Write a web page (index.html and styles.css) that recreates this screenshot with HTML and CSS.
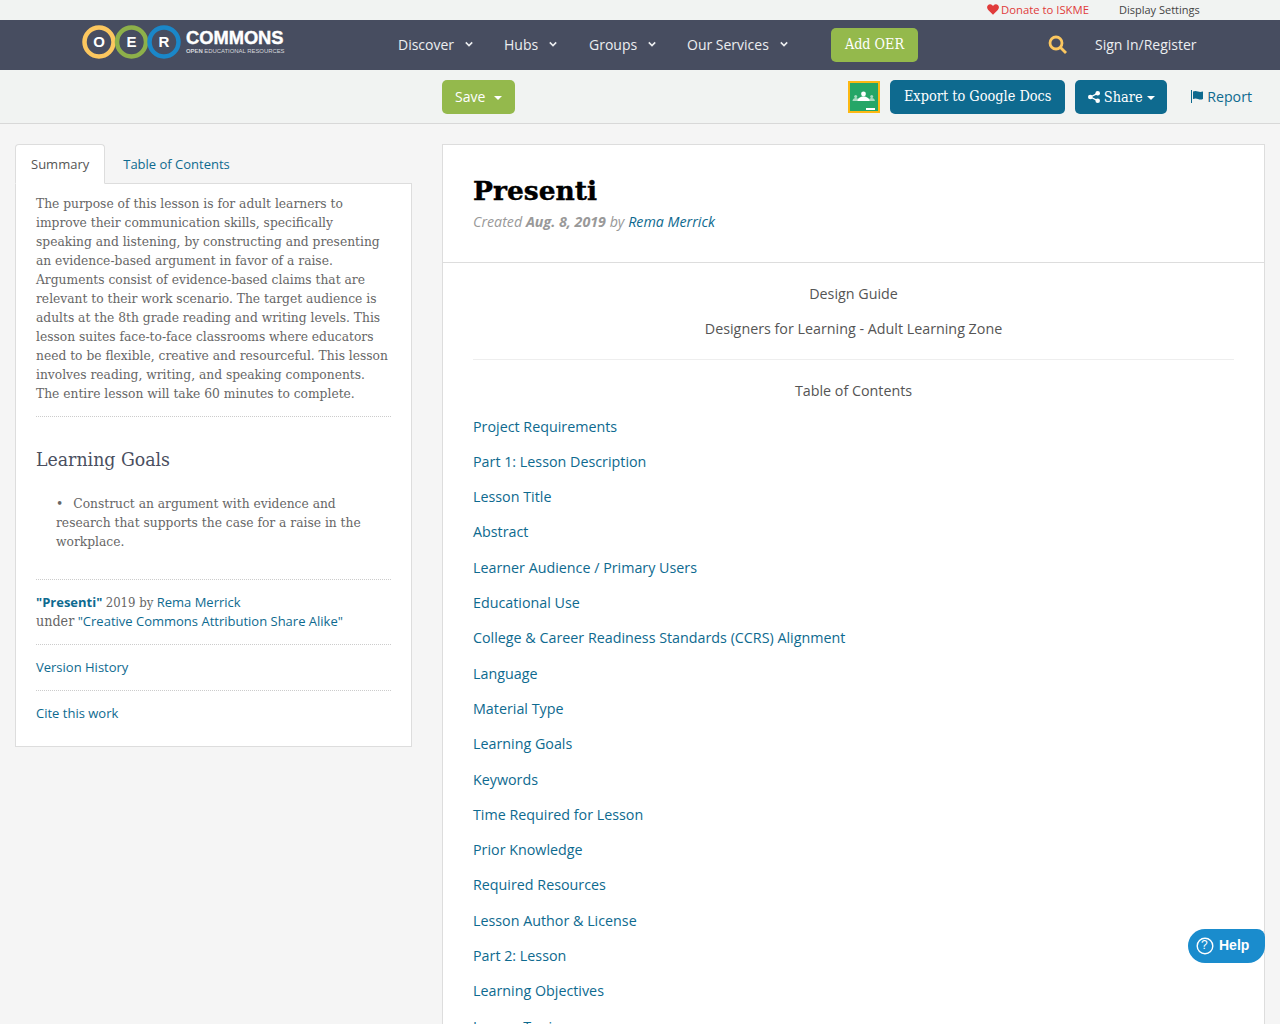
FILE: index.html
```html
<!DOCTYPE html>
<html lang="en">
<head>
    <meta charset="UTF-8">
    <meta name="viewport" content="width=device-width, initial-scale=1.0">
    <title>Presenti - OER Commons</title>
    <link rel="stylesheet" href="styles.css">
</head>
<body>
    <div class="utility-bar">
        <a class="donate" href="#">
            <svg class="heart" viewBox="0 0 24 22"><path d="M12 21.5 2.400 11.800C-.6 8.700-.5 4.600 1.900 2.300 4.300 0 8.300 0 10.700 2.500L12 3.900l1.300-1.400C15.700 0 19.700 0 22.100 2.300c2.400 2.300 2.500 6.400-.5 9.500z"/></svg>
            Donate to ISKME
        </a>
        <a class="display-settings" href="#">Display Settings</a>
    </div>

    <nav class="main-nav">
        <a class="logo" href="#">
            <svg width="100" height="36" viewBox="0 0 100 36">
                <circle cx="17" cy="18" r="14.500" fill="none" stroke="#fcc75f" stroke-width="4.500"/>
                <circle cx="49.500" cy="18" r="14.500" fill="none" stroke="#8db04a" stroke-width="4.500"/>
                <circle cx="82" cy="18" r="14.500" fill="none" stroke="#1a87c9" stroke-width="4.500"/>
                <text x="17" y="23" class="logo-letter">O</text>
                <text x="49.500" y="23" class="logo-letter">E</text>
                <text x="82" y="23" class="logo-letter">R</text>
            </svg>
            <span class="logo-text">
                <span class="logo-title">COMMONS</span>
                <span class="logo-sub"><b>OPEN</b> EDUCATIONAL RESOURCES</span>
            </span>
        </a>
        <ul class="nav-links">
            <li class="nav-discover">Discover <svg class="chevron" viewBox="0 0 10 6"><path d="M1 1l4 4 4-4"/></svg></li>
            <li class="nav-hubs">Hubs <svg class="chevron" viewBox="0 0 10 6"><path d="M1 1l4 4 4-4"/></svg></li>
            <li class="nav-groups">Groups <svg class="chevron" viewBox="0 0 10 6"><path d="M1 1l4 4 4-4"/></svg></li>
            <li class="nav-services">Our Services <svg class="chevron" viewBox="0 0 10 6"><path d="M1 1l4 4 4-4"/></svg></li>
        </ul>
        <a class="add-oer" href="#">Add OER</a>
        <svg class="search-icon" viewBox="0 0 20 20"><circle cx="8" cy="8" r="6" /><path d="M12.500 12.500 18 18"/></svg>
        <a class="sign-in" href="#">Sign In/Register</a>
    </nav>

    <div class="action-bar">
        <a class="btn btn-save" href="#">Save <span class="caret"></span></a>
        <div class="action-right">
            <a class="classroom" href="#">
                <svg width="28" height="28" viewBox="0 0 28 28">
                    <rect width="28" height="28" fill="#25a667"/>
                    <circle cx="5.700" cy="13.500" r="1.500" fill="#a8dbc0"/>
                    <circle cx="21.700" cy="13.500" r="1.500" fill="#a8dbc0"/>
                    <path d="M2.500 18c0-2 1.500-3 3.200-3s3.200 1 3.200 3zM18.500 18c0-2 1.500-3 3.200-3s3.200 1 3.200 3z" fill="#a8dbc0"/>
                    <circle cx="13.500" cy="11" r="2.400" fill="#fff"/>
                    <path d="M7.500 18c0-3 3-4.500 6-4.500s6 1.500 6 4.500z" fill="#fff"/>
                    <rect x="16" y="25" width="9" height="2" fill="#fff"/>
                </svg>
            </a>
            <a class="btn btn-blue btn-export" href="#">Export to Google Docs</a>
            <a class="btn btn-blue btn-share" href="#">
                <svg class="share-icon" viewBox="0 0 12 12"><circle cx="2.300" cy="6" r="2.300"/><circle cx="9.700" cy="2.300" r="2.300"/><circle cx="9.700" cy="9.700" r="2.300"/><path d="M2.300 6l7.400-3.700M2.300 6l7.400 3.700" stroke="#fff" stroke-width="1.300"/></svg>
                Share <span class="caret"></span>
            </a>
            <a class="report" href="#">
                <svg class="flag-icon" viewBox="0 0 14 13"><path d="M1 0h1v13H1z"/><path d="M3 1.500c2-1 3.500-.6 5 0s3 .6 5 0v7.500c-2 .8-3.500.6-5 0s-3-.8-5 0z"/></svg>
                Report
            </a>
        </div>
    </div>

    <div class="page">
        <aside class="sidebar">
            <div class="tabs">
                <a class="tab active" href="#">Summary</a>
                <a class="tab" href="#">Table of Contents</a>
            </div>
            <div class="panel">
                <p class="summary">The purpose of this lesson is for adult learners to improve their communication skills, specifically speaking and listening, by constructing and presenting an evidence-based argument in favor of a raise. Arguments consist of evidence-based claims that are relevant to their work scenario. The target audience is adults at the 8th grade reading and writing levels. This lesson suites face-to-face classrooms where educators need to be flexible, creative and resourceful. This lesson involves reading, writing, and speaking components. The entire lesson will take 60 minutes to complete.</p>
                <h3>Learning Goals</h3>
                <ul class="goals">
                    <li>Construct an argument with evidence and research that supports the case for a raise in the workplace.</li>
                </ul>
                <div class="panel-row license">
                    <a href="#"><b>"Presenti"</b></a> <span class="slab slab-year">2019 by</span> <a href="#">Rema Merrick</a><br>
                    <span class="slab">under</span> <a href="#">"Creative Commons Attribution Share Alike"</a>
                </div>
                <div class="panel-row"><a href="#">Version History</a></div>
                <div class="panel-row"><a href="#">Cite this work</a></div>
            </div>
        </aside>

        <main class="content">
            <header class="content-head">
                <h1>Presenti</h1>
                <p class="meta">Created <b>Aug. 8, 2019</b> by <a href="#">Rema Merrick</a></p>
            </header>
            <div class="content-body">
                <p class="center">Design Guide</p>
                <p class="center">Designers for Learning - Adult Learning Zone</p>
                <hr>
                <p class="center toc-title">Table of Contents</p>
                <ul class="toc">
                    <li><a href="#">Project Requirements</a></li>
                    <li><a href="#">Part 1: Lesson Description</a></li>
                    <li><a href="#">Lesson Title</a></li>
                    <li><a href="#">Abstract</a></li>
                    <li><a href="#">Learner Audience / Primary Users</a></li>
                    <li><a href="#">Educational Use</a></li>
                    <li><a href="#">College &amp; Career Readiness Standards (CCRS) Alignment</a></li>
                    <li><a href="#">Language</a></li>
                    <li><a href="#">Material Type</a></li>
                    <li><a href="#">Learning Goals</a></li>
                    <li><a href="#">Keywords</a></li>
                    <li><a href="#">Time Required for Lesson</a></li>
                    <li><a href="#">Prior Knowledge</a></li>
                    <li><a href="#">Required Resources</a></li>
                    <li><a href="#">Lesson Author &amp; License</a></li>
                    <li><a href="#">Part 2: Lesson</a></li>
                    <li><a href="#">Learning Objectives</a></li>
                    <li><a href="#">Lesson Topics</a></li>
                </ul>
            </div>
        </main>
    </div>

    <a class="help" href="#">
        <svg class="help-icon" viewBox="0 0 18 18"><circle cx="9" cy="9" r="7.800"/></svg>
        <span class="help-q">?</span>
        Help
    </a>
</body>
</html>
```

FILE: styles.css
```css
* {
    margin: 0;
    padding: 0;
    box-sizing: border-box;
}

html, body {
    height: 1024px;
    overflow: hidden;
}

body {
    font-family: 'Open Sans', sans-serif;
    font-size: 14px;
    background: #f5f5f5;
    color: #555;
    position: relative;
}

a {
    color: #0e6a8f;
    text-decoration: none;
}

.utility-bar {
    height: 20px;
    background: #f1f3f2;
    display: flex;
    align-items: center;
    font-size: 11.300px;
    padding: 0 0 2px 987px;
}

.donate {
    color: #e03b3b;
    display: flex;
    align-items: center;
    gap: 2px;
    width: 132px;
}

.heart {
    width: 12px;
    height: 11px;
    fill: #e03b3b;
}

.display-settings {
    color: #444;
    font-size: 11px;
}

.main-nav {
    height: 50px;
    background: #474d60;
    display: flex;
    align-items: center;
    color: #fff;
}

.logo {
    display: flex;
    align-items: center;
    margin: 0 0 6px 82px;
    width: 316px;
    gap: 4px;
}

.logo-letter {
    font-family: 'Liberation Sans', sans-serif;
    font-size: 15px;
    font-weight: bold;
    fill: #fff;
    text-anchor: middle;
}

.logo-text {
    display: flex;
    flex-direction: column;
    color: #fff;
    font-family: 'Liberation Sans', sans-serif;
}

.logo-title {
    font-size: 18.300px;
    font-weight: bold;
    line-height: 19px;
    -webkit-text-stroke: 0.4px #fff;
}

.logo-sub {
    font-size: 5.900px;
    line-height: 9px;
    color: #d5d7dc;
}

.nav-links {
    list-style: none;
    display: flex;
    font-size: 14px;
    color: #eceef0;
    margin-bottom: 2px;
}

.nav-links li {
    display: flex;
    align-items: center;
}

.nav-discover { width: 106px; }
.nav-hubs { width: 85px; }
.nav-groups { width: 98px; }
.nav-services { width: 144px; }

.chevron {
    width: 8px;
    height: 6px;
    fill: none;
    stroke: #eceef0;
    stroke-width: 2;
    margin-left: 11px;
}

.add-oer {
    width: 87px;
    height: 34px;
    line-height: 33px;
    text-align: center;
    background: #94b94c;
    color: #fff;
    border-radius: 5px;
    font-family: 'DejaVu Serif Condensed', 'DejaVu Serif', serif;
    font-size: 14.200px;
}

.search-icon {
    width: 20px;
    height: 20px;
    fill: none;
    stroke: #fcc75f;
    stroke-width: 2.800;
    margin-left: 130px;
}

.sign-in {
    color: #eceef0;
    margin: 0 0 2px 27px;
}

.action-bar {
    height: 54px;
    background: #f1f3f2;
    border-bottom: 1px solid #d8d8d8;
    display: flex;
    align-items: center;
    padding: 0 28px 0 442px;
    justify-content: space-between;
}

.action-right {
    display: flex;
    align-items: center;
}

.btn {
    height: 34px;
    line-height: 33px;
    border-radius: 5px;
    color: #fff;
    display: inline-block;
}

.btn-save {
    background: #94b94c;
    width: 73px;
    padding-left: 13px;
    font-size: 14px;
}

.caret {
    display: inline-block;
    width: 0;
    height: 0;
    border-top: 4px solid #fff;
    border-left: 4px solid transparent;
    border-right: 4px solid transparent;
    vertical-align: 2px;
}

.btn-save .caret {
    margin-left: 5px;
}

.classroom {
    width: 32px;
    height: 32px;
    border: 2px solid #fcb813;
    display: block;
    margin-right: 10px;
}

.classroom svg {
    display: block;
}

.btn-blue {
    background: #0e6a8f;
    font-family: 'DejaVu Serif Condensed', 'DejaVu Serif', serif;
    font-size: 14.400px;
}

.btn-export {
    width: 175px;
    text-align: center;
    margin-right: 10px;
}

.btn-share {
    width: 92px;
    text-align: center;
    margin-right: 23px;
    line-height: 34px;
}

.share-icon {
    width: 12px;
    height: 12px;
    fill: #fff;
    vertical-align: -1px;
}

.report {
    font-size: 14.200px;
    display: flex;
    align-items: center;
    gap: 3px;
}

.flag-icon {
    width: 14px;
    height: 13px;
    fill: #0e6a8f;
}

.page {
    display: flex;
    align-items: flex-start;
    padding: 20px 15px 0;
    gap: 30px;
}

.sidebar {
    width: 397px;
    flex: none;
}

.tabs {
    display: flex;
    height: 40px;
    font-size: 13px;
    position: relative;
    z-index: 1;
}

.tab {
    height: 40px;
    line-height: 39px;
    padding: 0 15px;
    border: 1px solid transparent;
    border-radius: 4px 4px 0 0;
    margin-right: 2px;
}

.tab.active {
    background: #fff;
    color: #555;
    border-color: #ddd;
    border-bottom-color: #fff;
}

.panel {
    background: #fff;
    border: 1px solid #ddd;
    margin-top: -1px;
    padding: 10px 20px 13px;
    font-size: 13px;
}

.summary, .goals {
    font-family: 'DejaVu Serif Condensed', 'DejaVu Serif', serif;
    font-size: 13.650px;
    line-height: 19px;
    color: #666;
}

.summary {
    padding-bottom: 13px;
    border-bottom: 1px dotted #ccc;
}

.panel h3 {
    font-family: 'DejaVu Serif Condensed', 'DejaVu Serif', serif;
    font-weight: normal;
    font-size: 19.300px;
    color: #4a4f5f;
    margin: 31px 0 22px;
    line-height: 24px;
}

.goals {
    list-style: none;
    padding: 0 20px 28px;
    border-bottom: 1px dotted #ccc;
}

.goals li::before {
    content: "\2022";
    margin-right: 10px;
}

.slab {
    font-family: 'DejaVu Serif Condensed', 'DejaVu Serif', serif;
    font-size: 14.200px;
    color: #666;
}

.slab-year {
    font-size: 13px;
}

.panel-row {
    line-height: 19px;
    padding: 13px 0;
    border-bottom: 1px dotted #ccc;
}

.panel-row:last-child {
    border-bottom: none;
    padding-bottom: 10px;
}

.content {
    width: 823px;
    flex: none;
    background: #fff;
    border: 1px solid #ddd;
    height: 900px;
}

.content-head {
    height: 118px;
    padding: 27px 30px 0;
    border-bottom: 1px solid #ddd;
}

h1 {
    font-family: 'DejaVu Serif', serif;
    font-weight: bold;
    font-size: 26.500px;
    line-height: 38px;
    color: #000;
    -webkit-text-stroke: 0.4px #000;
}

.meta {
    font-size: 14.250px;
    font-style: italic;
    color: #999;
    line-height: 24px;
}

.content-body {
    padding: 21px 30px 0;
    color: #555;
    font-size: 14.300px;
}

.center {
    text-align: center;
    line-height: 20px;
    margin-bottom: 15px;
}

.toc-title {
    margin-bottom: 15.550px;
}

hr {
    border: none;
    border-top: 1px solid #eee;
    margin: 20px 0 21px;
}

.toc {
    list-style: none;
}

.toc li {
    height: 35.300px;
    line-height: 20px;
}

.help {
    position: absolute;
    left: 1188px;
    top: 929px;
    width: 77px;
    height: 34px;
    background: #1a8ccd;
    color: #fff;
    border-radius: 17px 8px 17px 17px;
    font-family: 'Liberation Sans', sans-serif;
    font-size: 14px;
    font-weight: bold;
    line-height: 33px;
    padding-left: 31px;
}

.help-icon {
    position: absolute;
    left: 8px;
    top: 8px;
    width: 18px;
    height: 18px;
    fill: none;
    stroke: #fff;
    stroke-width: 1.400;
}

.help-q {
    position: absolute;
    left: 13px;
    top: 0;
    font-size: 12px;
    font-weight: normal;
}
```
